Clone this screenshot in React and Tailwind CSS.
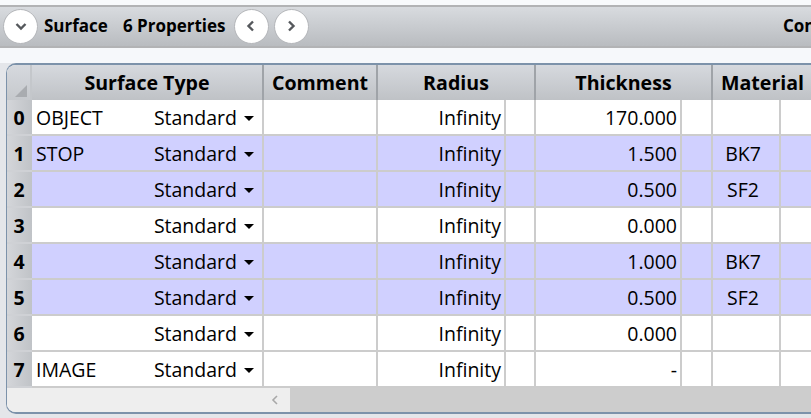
import React from 'react';

const rows = [
  { name: 'OBJECT', thick: '170.000', mat: '' },
  { name: 'STOP', thick: '1.500', mat: 'BK7', on: true },
  { name: '', thick: '0.500', mat: 'SF2', on: true },
  { name: '', thick: '0.000', mat: '' },
  { name: '', thick: '1.000', mat: 'BK7', on: true },
  { name: '', thick: '0.500', mat: 'SF2', on: true },
  { name: '', thick: '0.000', mat: '' },
  { name: 'IMAGE', thick: '-', mat: '' },
];

const RoundBtn = ({ children }) => (
  <div className="w-[35px] h-[35px] rounded-full bg-white border border-[#b4b6ba] flex items-center justify-center shrink-0">
    <svg width="14" height="14" viewBox="0 0 14 14" fill="none" stroke="#55585c" strokeWidth="2.4">
      {children}
    </svg>
  </div>
);

const HeadCell = ({ children, className = '' }) => (
  <div className={`h-[35px] flex items-center justify-center border-r-2 border-[#9fa3a8] bg-gradient-to-b from-[#d6d9de] to-[#bfc2c6] font-bold text-[19.6px] text-black whitespace-nowrap overflow-hidden ${className}`}>
    {children}
  </div>
);

const App = () => {
  return (
    <div className="w-[811px] h-[418px] overflow-hidden bg-[#e4e6ea] font-['Open_Sans',sans-serif] text-black">
      <div className="h-[5px] bg-[#f8fafc]"></div>
      <div className="h-[43px] border-y-2 border-[#b2b3b5] bg-gradient-to-b from-[#d8dbdf] to-[#b9bcc0] flex items-center pl-[3px] pb-[1px]">
        <RoundBtn><path d="M2.5 5l4.5 4.5L11.5 5" /></RoundBtn>
        <span className="ml-[6px] font-bold text-[17px]">Surface</span>
        <span className="ml-[15px] font-bold text-[17px]">6 Properties</span>
        <div className="ml-[8px] flex gap-[5px]">
          <RoundBtn><path d="M9 2.5L4.5 7 9 11.5" /></RoundBtn>
          <RoundBtn><path d="M5 2.5L9.5 7 5 11.5" /></RoundBtn>
        </div>
        <span className="ml-auto font-bold text-[17px] w-[28px] overflow-hidden whitespace-nowrap">Configuration</span>
      </div>
      <div className="h-[15px] bg-[#f6f8fb]"></div>
      <div className="ml-[6px] w-[830px] h-[351px] bg-white border-y-2 border-l border-[#7c92aa] rounded-tl-[10px] rounded-bl-[10px] overflow-hidden">
        <div className="grid grid-cols-[25px_232px_114px_128px_30px_146px_31px_68px_40px] text-[19.5px]">
          <div className="h-[35px] bg-gradient-to-b from-[#d6d9de] to-[#c6c9cd] border-r-2 border-[#c4c7cb] flex items-end justify-end p-[3px]">
            <div className="w-[12px] h-[12px] bg-[#a9acb0] [clip-path:polygon(100%_0,100%_100%,0_100%)]"></div>
          </div>
          <HeadCell>Surface Type</HeadCell>
          <HeadCell>Comment</HeadCell>
          <HeadCell className="col-span-2">Radius</HeadCell>
          <HeadCell className="col-span-2">Thickness</HeadCell>
          <HeadCell className="col-span-2 justify-start pl-[8px]">Material</HeadCell>
          {rows.map((r, i) => {
            const cell = `h-[36px] pt-[2px] border-r-2 border-b-2 border-[#cccccc] flex items-center ${r.on ? 'bg-[#d0d0ff]' : 'bg-white'}`;
            return (
              <React.Fragment key={i}>
                <div className="h-[36px] pt-[2px] pr-[1px] border-b-2 border-[#cfd1d5] bg-gradient-to-r from-[#d4d6da] to-[#c0c3c7] flex items-center justify-center font-bold text-[19.5px]">{i}</div>
                <div className={`${cell} pl-[4px] pr-[5px] justify-between`}>
                  <span>{r.name}</span>
                  <span className="flex items-center">
                    Standard
                    <span className="ml-[7px] mr-[3px] w-0 h-0 border-x-[5px] border-t-[5px] border-x-transparent border-t-black"></span>
                  </span>
                </div>
                <div className={cell}></div>
                <div className={`${cell} justify-end pr-[3px]`}>Infinity</div>
                <div className={cell}></div>
                <div className={`${cell} justify-end pr-[3px]`}>{r.thick}</div>
                <div className={cell}></div>
                <div className={`${cell} justify-center pr-[6px]`}>{r.mat}</div>
                <div className={cell}></div>
              </React.Fragment>
            );
          })}
        </div>
        <div className="h-[24px] flex">
          <div className="w-[283px] h-full bg-[#eeeeee] flex items-center justify-end pr-[10px]">
            <svg width="10" height="12" viewBox="0 0 10 12" fill="none" stroke="#a8a8a8" strokeWidth="1.6"><path d="M7 2L3 6l4 4" /></svg>
          </div>
          <div className="flex-1 h-full bg-[#cdcdcd]"></div>
        </div>
      </div>
    </div>
  );
};

export default App;
